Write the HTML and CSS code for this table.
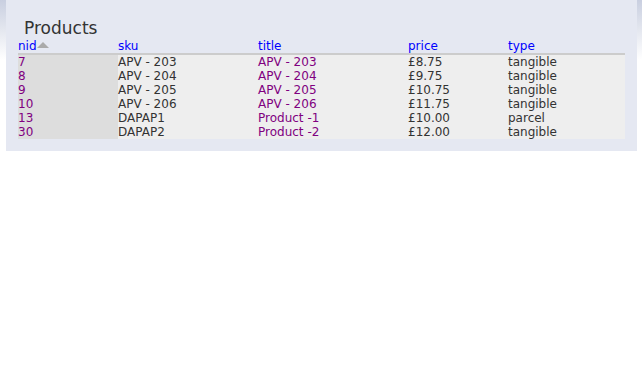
FILE: index.html
```html
<!DOCTYPE html>
<html>
<head>
<meta charset="utf-8">
<link rel="stylesheet" href="styles.css">
</head>
<body>
<div class="page">
  <div class="edge edge-left"></div>
  <div class="panel">
    <h2 class="title">Products</h2>
    <table class="grid">
      <thead>
        <tr>
          <th class="c-nid"><a>nid</a><span class="sort"></span></th>
          <th class="c-sku"><a>sku</a></th>
          <th class="c-title"><a>title</a></th>
          <th class="c-price"><a>price</a></th>
          <th class="c-type"><a>type</a></th>
        </tr>
      </thead>
      <tbody>
        <tr><td class="active"><a>7</a></td><td>APV - 203</td><td><a>APV - 203</a></td><td>£8.75</td><td>tangible</td></tr>
        <tr><td class="active"><a>8</a></td><td>APV - 204</td><td><a>APV - 204</a></td><td>£9.75</td><td>tangible</td></tr>
        <tr><td class="active"><a>9</a></td><td>APV - 205</td><td><a>APV - 205</a></td><td>£10.75</td><td>tangible</td></tr>
        <tr><td class="active"><a>10</a></td><td>APV - 206</td><td><a>APV - 206</a></td><td>£11.75</td><td>tangible</td></tr>
        <tr><td class="active"><a>13</a></td><td>DAPAP1</td><td><a>Product -1</a></td><td>£10.00</td><td>parcel</td></tr>
        <tr><td class="active"><a>30</a></td><td>DAPAP2</td><td><a>Product -2</a></td><td>£12.00</td><td>tangible</td></tr>
      </tbody>
    </table>
  </div>
  <div class="edge edge-right"></div>
</div>
</body>
</html>
```

FILE: styles.css
```css
html, body {
  margin: 0;
  padding: 0;
  background: #ffffff;
}
body {
  font-family: "DejaVu Sans", Verdana, sans-serif;
  font-size: 12px;
  color: #333333;
  -webkit-font-smoothing: none;
}
.page {
  display: flex;
  align-items: stretch;
}
.edge {
  width: 6px;
  height: 60px;
  background: linear-gradient(to bottom, #c9cfe0 0%, #ffffff 100%);
}
.edge-right {
  width: 5px;
  height: 60px;
}
.panel {
  flex: 1;
  background: #e5e8f2;
  padding: 17px 12px 12px 12px;
}
.title {
  margin: 0 0 0 6px;
  font-size: 17px;
  font-weight: normal;
  line-height: 22px;
  color: #333333;
}
.grid {
  width: 607px;
  border-collapse: collapse;
  font-size: 12px;
}
.grid th {
  text-align: left;
  font-weight: normal;
  padding: 0;
  line-height: 14px;
  border-bottom: 2px solid #cccccc;
}
.grid th a {
  color: #0000ff;
}
.sort {
  display: inline-block;
  width: 0;
  height: 0;
  border-left: 6px solid transparent;
  border-right: 6px solid transparent;
  border-bottom: 6px solid #aaaaaa;
  vertical-align: 2px;
}
.c-nid { width: 100px; }
.c-sku { width: 140px; }
.c-title { width: 150px; }
.c-price { width: 100px; }
.grid tbody tr {
  background: #eeeeee;
}
.grid td {
  padding: 0;
  line-height: 14px;
  color: #333333;
}
.grid td a {
  color: #800080;
}
.grid td.active {
  background: #dddddd;
}
```
